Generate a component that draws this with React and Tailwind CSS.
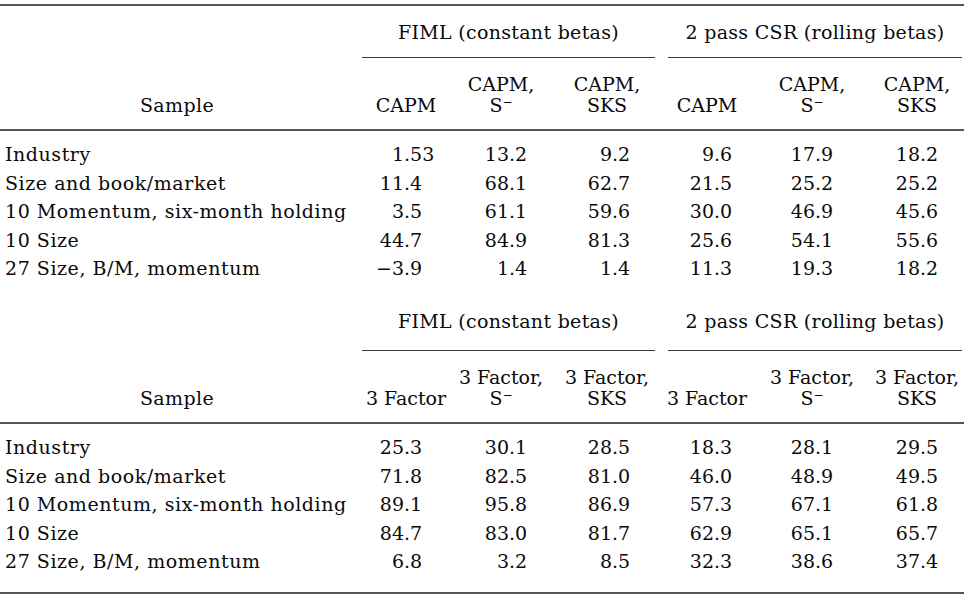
import React from 'react';

// column grid shared by both panels: sample + 3 FIML + 3 CSR
const GRID = 'grid grid-cols-[362px_88px_102px_110px_90px_120px_90px]';

// right padding per value column so the decimal points line up with the scan
const VAL_PAD = ['pr-[28px]', 'pr-[25px]', 'pr-[32px]', 'pr-[20px]', 'pr-[39px]', 'pr-[24px]'];

const PANELS = [
  {
    heads: [
      ['', 'CAPM'],
      ['CAPM,', 'S'],
      ['CAPM,', 'SKS'],
      ['', 'CAPM'],
      ['CAPM,', 'S'],
      ['CAPM,', 'SKS'],
    ],
    rows: [
      ['Industry', '1.53', '13.2', '9.2', '9.6', '17.9', '18.2'],
      ['Size and book/market', '11.4', '68.1', '62.7', '21.5', '25.2', '25.2'],
      ['10 Momentum, six-month holding', '3.5', '61.1', '59.6', '30.0', '46.9', '45.6'],
      ['10 Size', '44.7', '84.9', '81.3', '25.6', '54.1', '55.6'],
      ['27 Size, B/M, momentum', '\u22123.9', '1.4', '1.4', '11.3', '19.3', '18.2'],
    ],
  },
  {
    heads: [
      ['', '3 Factor'],
      ['3 Factor,', 'S'],
      ['3 Factor,', 'SKS'],
      ['', '3 Factor'],
      ['3 Factor,', 'S'],
      ['3 Factor,', 'SKS'],
    ],
    rows: [
      ['Industry', '25.3', '30.1', '28.5', '18.3', '28.1', '29.5'],
      ['Size and book/market', '71.8', '82.5', '81.0', '46.0', '48.9', '49.5'],
      ['10 Momentum, six-month holding', '89.1', '95.8', '86.9', '57.3', '67.1', '61.8'],
      ['10 Size', '84.7', '83.0', '81.7', '62.9', '65.1', '65.7'],
      ['27 Size, B/M, momentum', '6.8', '3.2', '8.5', '32.3', '38.6', '37.4'],
    ],
  },
];

function Head({ top, bottom }) {
  // second line "S" carries the superscript minus
  return (
    <div className="flex flex-col items-center justify-end leading-[21px] whitespace-nowrap">
      <span>{top}</span>
      <span>
        {bottom === 'S' ? (
          <>
            S<sup className="text-[12px]">{'\u2212'}</sup>
          </>
        ) : (
          bottom
        )}
      </span>
    </div>
  );
}

function Value({ v, pad }) {
  const dot = v.indexOf('.');
  return (
    <div className={`flex justify-end ${pad}`}>
      <span>{v.slice(0, dot)}</span>
      <span className="inline-block w-[18px] text-left whitespace-nowrap">{v.slice(dot)}</span>
    </div>
  );
}

function Panel({ data, groupPad }) {
  return (
    <div>
      {/* group titles with their rules */}
      <div className={GRID}>
        <div />
        <div className="col-span-3 mr-[7px] border-b border-[#3a3a3a]">
          <div className={`text-center leading-[21px] tracking-[0.3px] ${groupPad}`}>FIML (constant betas)</div>
        </div>
        <div className="col-span-3 ml-[6px] border-b border-[#3a3a3a]">
          <div className={`text-center leading-[21px] tracking-[0.3px] ${groupPad}`}>2 pass CSR (rolling betas)</div>
        </div>
      </div>

      {/* column heads */}
      <div className={`${GRID} pt-[16px] pb-[13px]`}>
        <div className="flex items-end justify-center pr-[8px] leading-[21px] tracking-[0.4px]">Sample</div>
        {data.heads.map((h, i) => (
          <Head key={i} top={h[0]} bottom={h[1]} />
        ))}
      </div>

      <div className="border-t-2 border-[#555]" />

      {/* body */}
      <div className="pt-[9px]">
        {data.rows.map((r) => (
          <div key={r[0]} className={`${GRID} leading-[28.6px]`}>
            <div className="pl-[5px] whitespace-nowrap tracking-[0.55px]">{r[0]}</div>
            {r.slice(1).map((v, i) => (
              <Value key={i} v={v} pad={VAL_PAD[i]} />
            ))}
          </div>
        ))}
      </div>
    </div>
  );
}

export default function App() {
  return (
    <div className="w-[964px] h-[596px] overflow-hidden bg-white text-[#0a0a0a] text-[19px] font-['DejaVu_Serif',serif]">
      <div className="mt-[4px] border-t-2 border-[#555]" />
      <Panel data={PANELS[0]} groupPad="pt-[16px] pb-[14px]" />
      <Panel data={PANELS[1]} groupPad="pt-[28px] pb-[18px]" />
      <div className="mt-[16px] border-t-2 border-[#555]" />
    </div>
  );
}
